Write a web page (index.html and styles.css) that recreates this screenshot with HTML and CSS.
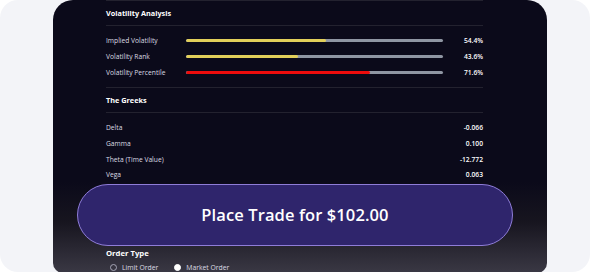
FILE: index.html
```html
<!DOCTYPE html>
<html>
<head>
<meta charset="utf-8">
<link rel="stylesheet" href="styles.css">
</head>
<body>
<div class="frame">
  <div class="panel">
    <section class="section first">
      <h2 class="heading">Volatility Analysis</h2>
      <div class="rows">
        <div class="row">
          <span class="label">Implied Volatility</span>
          <div class="bar"><div class="fill yellow" style="width:54.4%"></div></div>
          <span class="value">54.4%</span>
        </div>
        <div class="row">
          <span class="label">Volatility Rank</span>
          <div class="bar"><div class="fill yellow" style="width:43.6%"></div></div>
          <span class="value">43.6%</span>
        </div>
        <div class="row">
          <span class="label">Volatility Percentile</span>
          <div class="bar"><div class="fill red" style="width:71.6%"></div></div>
          <span class="value">71.6%</span>
        </div>
      </div>
    </section>
    <section class="section last">
      <h2 class="heading">The Greeks</h2>
      <div class="rows">
        <div class="row simple"><span class="label">Delta</span><span class="value">-0.066</span></div>
        <div class="row simple"><span class="label">Gamma</span><span class="value">0.100</span></div>
        <div class="row simple"><span class="label">Theta (Time Value)</span><span class="value">-12.772</span></div>
        <div class="row simple"><span class="label">Vega</span><span class="value">0.063</span></div>
      </div>
    </section>
    <button class="trade">Place Trade for $102.00</button>
    <div class="order">
      <div class="order-title">Order Type</div>
      <div class="radios">
        <span class="radio"><span class="dot"></span>Limit Order</span>
        <span class="radio"><span class="dot on"></span>Market Order</span>
      </div>
    </div>
  </div>
</div>
</body>
</html>
```
FILE: styles.css
```css
* { box-sizing: border-box; }
html, body { margin: 0; padding: 0; }
body {
  background: #ffffff;
  width: 590px;
  height: 274px;
  overflow: hidden;
  font-family: "Open Sans", "Noto Sans", sans-serif;
}
.frame {
  width: 590px;
  height: 272px;
  background: #f3f4f8;
  border-radius: 18px;
  padding-left: 53px;
  overflow: hidden;
}
.panel {
  width: 494px;
  height: 273px;
  border-radius: 20px 20px 10px 10px;
  background: linear-gradient(to bottom, #0b0a1a 0px, #0b0a1a 182px, #17151f 222px, #3a3844 273px);
  padding: 0 64px 0 53px;
  color: #ffffff;
}
.section {
  border-bottom: 1px solid #23222f;
}
.section.first {
  border-top: 1px solid #23222f;
}
.section.last {
  border-bottom: none;
}
.heading {
  margin: 0;
  font-size: 7.3px;
  font-weight: 700;
  line-height: 24px;
  border-bottom: 1px solid #23222f;
  color: #ffffff;
}
.rows {
  padding: 7px 0;
}
.section.last .rows {
  padding-bottom: 0;
}
.row {
  display: flex;
  align-items: center;
  height: 15.7px;
  font-size: 6.7px;
}
.label {
  width: 80px;
  color: #dcdce4;
}
.bar {
  width: 257px;
  height: 3px;
  border-radius: 2px;
  background: #8f96a3;
  overflow: hidden;
}
.fill { height: 100%; border-radius: 2px; }
.fill.yellow { background: #e2cf5a; }
.fill.red { background: #ec0c0c; }
.value {
  margin-left: auto;
  font-weight: 600;
  color: #ffffff;
}
.row.simple .label { width: auto; }
.trade {
  display: block;
  margin: 1px 0 0 -29px;
  width: 436px;
  height: 62px;
  border-radius: 31px;
  border: 1.5px solid #8f7dd8;
  background: #2f256c;
  color: #ffffff;
  font-family: "Open Sans", "Noto Sans", sans-serif;
  font-size: 16.5px;
  font-weight: 600;
  letter-spacing: 0.1px;
  padding: 0;
}
.order {
  padding-top: 1.5px;
}
.order-title {
  font-size: 7.7px;
  font-weight: 700;
  line-height: 12px;
}
.radios {
  display: flex;
  align-items: center;
  gap: 16px;
  padding-left: 4px;
  margin-top: 1px;
  height: 14px;
  font-size: 6.8px;
  color: #dcdce4;
}
.radio {
  display: flex;
  align-items: center;
  gap: 5px;
}
.dot {
  width: 7px;
  height: 7px;
  border-radius: 50%;
  border: 1px solid #a4a4b4;
}
.dot.on {
  background: #ffffff;
  border-color: #ffffff;
}
```
